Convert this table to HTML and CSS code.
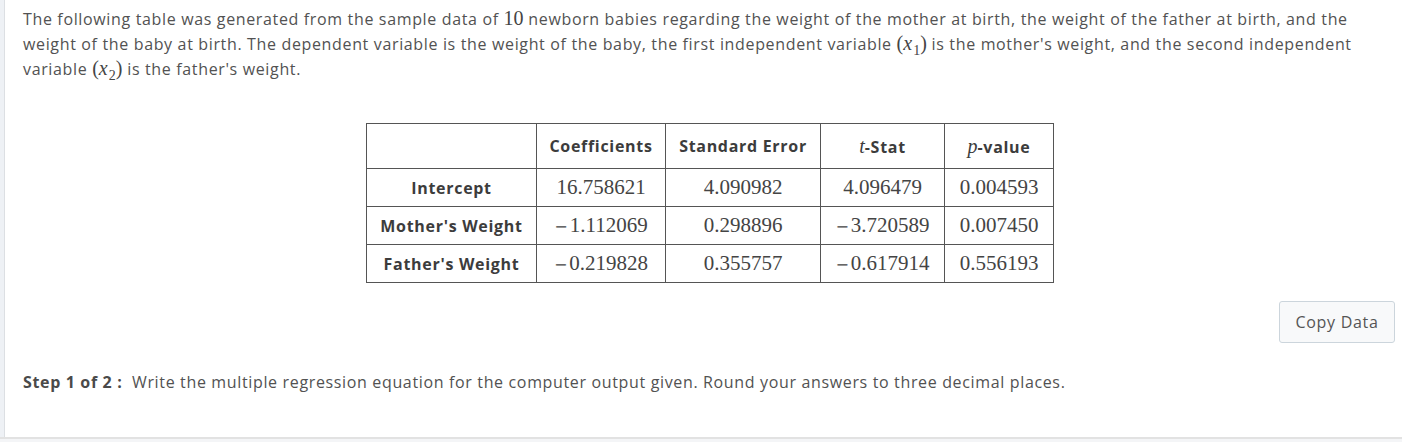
FILE: index.html
```html
<!DOCTYPE html>
<html>
<head>
<meta charset="utf-8">
<link rel="stylesheet" href="styles.css">
</head>
<body>
<div class="page">
  <div class="strip"></div>
  <div class="content">
    <p class="intro">The following table was generated from the sample data of <span class="num">10</span> newborn babies regarding the weight of the mother at birth, the weight of the father at birth, and the weight of the baby at birth. The dependent variable is the weight of the baby, the first independent variable <span class="math">(<i>x</i><sub>1</sub>)</span> is the mother's weight, and the second independent variable <span class="math">(<i>x</i><sub>2</sub>)</span> is the father's weight.</p>
    <div class="table-wrap">
      <table class="reg">
        <thead>
          <tr>
            <th class="c0"></th>
            <th class="c1">Coefficients</th>
            <th class="c2">Standard Error</th>
            <th class="c3"><i class="mi">t</i>-Stat</th>
            <th class="c4"><i class="mi">p</i>-value</th>
          </tr>
        </thead>
        <tbody>
          <tr>
            <th>Intercept</th>
            <td>16.758621</td>
            <td>4.090982</td>
            <td>4.096479</td>
            <td>0.004593</td>
          </tr>
          <tr>
            <th>Mother's Weight</th>
            <td><span class="minus">−</span>1.112069</td>
            <td>0.298896</td>
            <td><span class="minus">−</span>3.720589</td>
            <td>0.007450</td>
          </tr>
          <tr>
            <th>Father's Weight</th>
            <td><span class="minus">−</span>0.219828</td>
            <td>0.355757</td>
            <td><span class="minus">−</span>0.617914</td>
            <td>0.556193</td>
          </tr>
        </tbody>
      </table>
    </div>
    <div class="actions">
      <button class="copy">Copy Data</button>
    </div>
    <p class="step"><b>Step 1 of 2 :</b>&nbsp; Write the multiple regression equation for the computer output given. Round your answers to three decimal places.</p>
  </div>
</div>
<div class="below"></div>
</body>
</html>
```

FILE: styles.css
```css
html, body {
  margin: 0;
  padding: 0;
  background: #ffffff;
}
body {
  font-family: "Open Sans", "Liberation Sans", sans-serif;
  font-size: 16px;
  color: #525252;
  letter-spacing: 0.65px;
}
.page {
  display: flex;
  height: 437px;
  border-bottom: 2px solid #e2e2e2;
}
.strip {
  width: 4px;
  background: #eef1f5;
  border-right: 1px solid #dcdfe3;
  flex: none;
}
.content {
  flex: 1;
  padding: 6px 7px 0 18px;
}
.intro {
  margin: 0;
  line-height: 25px;
  padding-right: 20px;
}
.num {
  font-family: "Liberation Serif", serif;
  font-size: 20px;
  color: #444;
  letter-spacing: 0;
}
.math {
  font-family: "Liberation Serif", serif;
  font-size: 20px;
  color: #444;
  line-height: 1;
  letter-spacing: 0;
}
.math i {
  padding-right: 1px;
}
.math sub {
  font-size: 14px;
  line-height: 0;
}
.table-wrap {
  display: flex;
  justify-content: center;
  margin-top: 41px;
  padding-left: 2px;
}
.reg {
  border-collapse: collapse;
  border: 1px solid #555;
}
.reg th, .reg td {
  border: 1px solid #555;
  text-align: center;
  padding: 0;
}
.reg thead th {
  height: 44px;
  font-weight: 700;
  color: #3c3c3c;
  font-size: 16px;
  letter-spacing: 0.7px;
}
.reg tbody th {
  height: 37px;
  font-weight: 700;
  color: #3c3c3c;
  font-size: 16px;
  letter-spacing: 0.7px;
}
.reg td {
  font-family: "Liberation Serif", serif;
  font-size: 21px;
  color: #444;
  letter-spacing: 0;
}
.minus {
  font-family: "DejaVu Serif", serif;
  font-size: 16px;
  margin-right: 2px;
}
.c0 { width: 169px; }
.c1 { width: 128px; }
.c2 { width: 154px; }
.c3 { width: 123px; }
.c4 { width: 108px; }
.mi {
  font-family: "Liberation Serif", serif;
  font-size: 20px;
  font-weight: 400;
  letter-spacing: 0;
}
.actions {
  display: flex;
  justify-content: flex-end;
  margin-top: 18px;
}
.copy {
  font-family: "Open Sans", "Liberation Sans", sans-serif;
  font-size: 16px;
  letter-spacing: 0.7px;
  color: #555;
  background: #f8f9fa;
  border: 1px solid #ccd5dc;
  border-radius: 3px;
  width: 116px;
  height: 42px;
  padding: 0;
}
.step {
  margin: 27px 0 0 0;
  line-height: 24px;
}
.step b {
  color: #4a4a4a;
}
.below {
  height: 3px;
  background: #f4f5f7;
}
```
